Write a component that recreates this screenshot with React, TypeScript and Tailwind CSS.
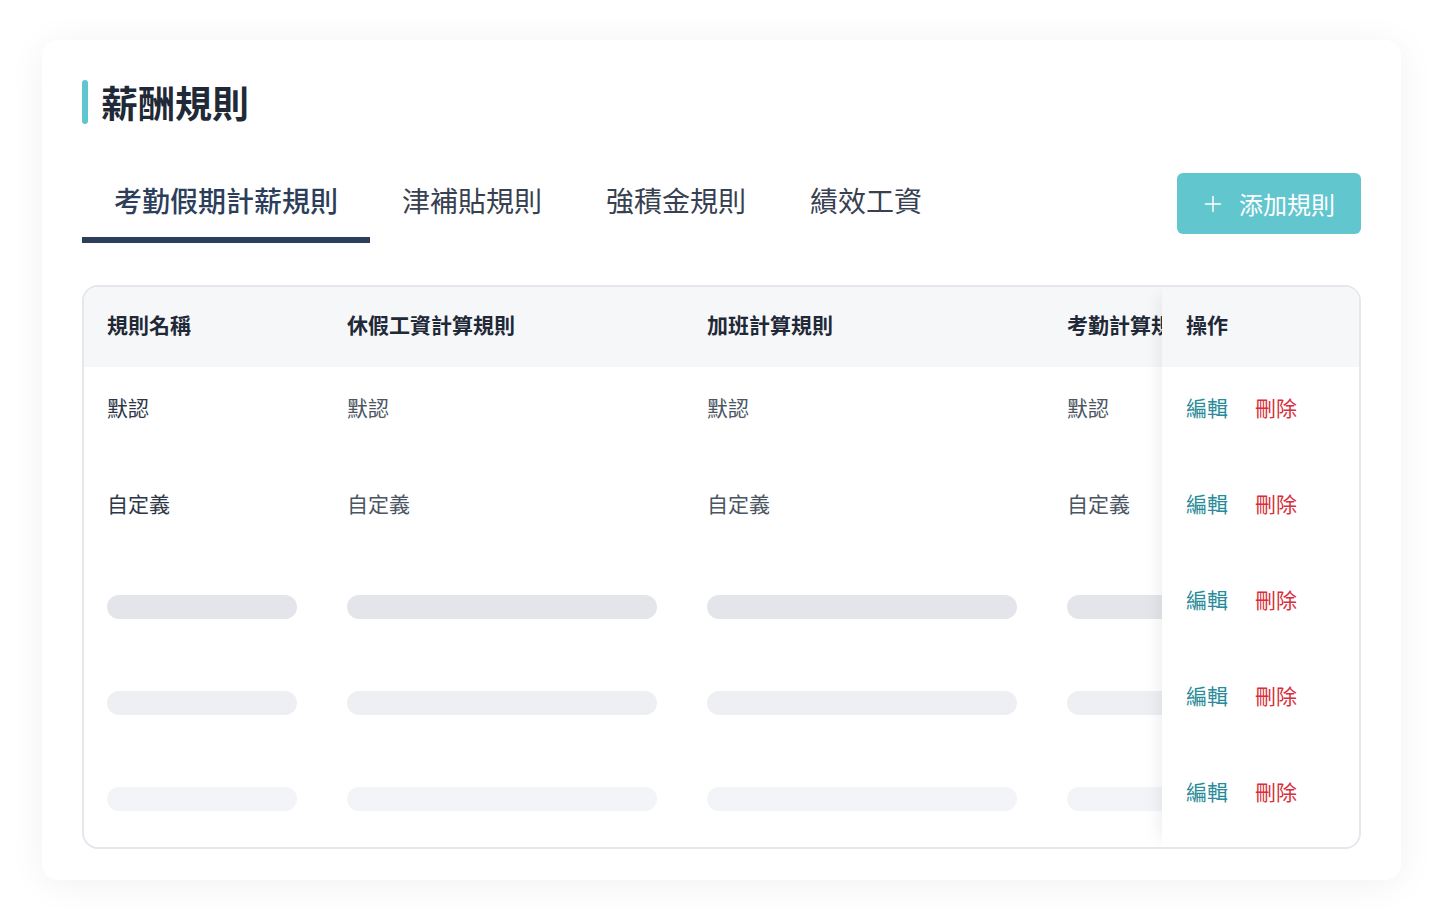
import { Plus } from 'lucide-react';

const tabs = ['考勤假期計薪規則', '津補貼規則', '強積金規則', '績效工資'];

const columns = [
  { title: '規則名稱', width: 'w-[240px]', bar: 'w-[190px]' },
  { title: '休假工資計算規則', width: 'w-[360px]', bar: 'w-[310px]' },
  { title: '加班計算規則', width: 'w-[360px]', bar: 'w-[310px]' },
  { title: '考勤計算規則', width: 'w-[360px]', bar: 'w-[310px]' },
];

type Row = { kind: 'text'; value: string } | { kind: 'skeleton'; color: string };

const rows: Row[] = [
  { kind: 'text', value: '默認' },
  { kind: 'text', value: '自定義' },
  { kind: 'skeleton', color: 'bg-[#e4e5ea]' },
  { kind: 'skeleton', color: 'bg-[#eeeff3]' },
  { kind: 'skeleton', color: 'bg-[#f3f4f7]' },
];

const App = () => {
  return (
    <div
      className="min-h-screen bg-white pl-[42px] pr-[40px] pt-10 pb-10"
      style={{ fontFamily: '"Noto Sans CJK TC", "Noto Sans", sans-serif' }}
    >
      <div className="rounded-2xl bg-white px-10 pt-10 pb-[31px] shadow-[0_4px_36px_rgba(0,0,0,0.06)]">
        {/* title */}
        <div className="flex items-center h-11">
          <span className="w-[6px] h-11 rounded-full bg-[#5fc6cf]" />
          <h1 className="ml-[13px] text-[37px] leading-[44px] font-bold text-[#1f2937]">薪酬規則</h1>
        </div>

        {/* tabs + button */}
        <div className="mt-[49px] flex items-start justify-between">
          <div className="flex pt-[7px]">
            {tabs.map((tab, i) => (
              <div key={tab} className="flex flex-col">
                <span
                  className={`px-8 text-[28px] leading-[40px] ${
                    i === 0 ? 'text-[#2c3e5a] font-medium' : 'text-[#374151]'
                  }`}
                >
                  {tab}
                </span>
                <span className={`mt-[17px] h-[6px] ${i === 0 ? 'bg-[#2d3e5a]' : 'bg-transparent'}`} />
              </div>
            ))}
          </div>
          <button className="h-[61px] flex items-center gap-[13px] rounded-md bg-[#62c6cf] pl-[23px] pr-[26px] text-white text-[24px]">
            <Plus size={26} strokeWidth={1.4} />
            <span>添加規則</span>
          </button>
        </div>

        {/* table */}
        <div className="mt-[42px] flex overflow-hidden rounded-2xl border-2 border-[#e6e7ec]">
          <div className="flex-1 overflow-hidden">
            <div className="flex h-20 items-center bg-[#f6f7f9]">
              {columns.map((c) => (
                <div
                  key={c.title}
                  className={`${c.width} shrink-0 pl-[23px] pb-[4px] text-[21px] font-semibold text-[#1f2937] whitespace-nowrap`}
                >
                  {c.title}
                </div>
              ))}
            </div>
            {rows.map((r, ri) => (
              <div key={ri} className="flex h-24 items-center">
                {columns.map((c, ci) => (
                  <div key={c.title} className={`${c.width} shrink-0 pl-[23px]`}>
                    {r.kind === 'text' ? (
                      <span
                        className={`block pb-[14px] text-[21px] whitespace-nowrap ${
                          ci === 0 ? 'text-[#2d3748]' : 'text-[#4b5563]'
                        }`}
                      >
                        {r.value}
                      </span>
                    ) : (
                      <div className={`${c.bar} h-6 rounded-full ${r.color}`} />
                    )}
                  </div>
                ))}
              </div>
            ))}
          </div>

          {/* fixed action column */}
          <div className="relative z-10 w-[197px] shrink-0 bg-white shadow-[-10px_0_16px_-8px_rgba(0,0,0,0.08)]">
            <div className="flex h-20 items-center bg-[#f6f7f9] pl-6 pb-[4px] text-[21px] font-semibold text-[#1f2937]">
              操作
            </div>
            {rows.map((_, ri) => (
              <div key={ri} className="flex h-24 items-center pl-6">
                <div className="flex gap-[27px] pb-[14px] text-[21px]">
                  <span className="text-[#2a8b99]">編輯</span>
                  <span className="text-[#d62f3a]">刪除</span>
                </div>
              </div>
            ))}
          </div>
        </div>
      </div>
    </div>
  );
};

export default App;
